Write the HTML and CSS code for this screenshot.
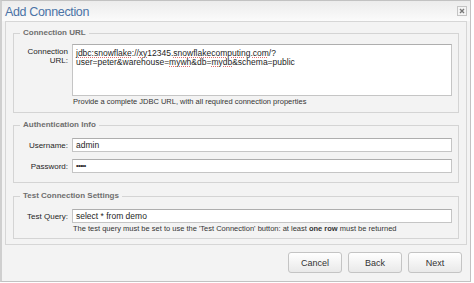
FILE: index.html
```html
<!DOCTYPE html>
<html>
<head>
<meta charset="utf-8">
<link rel="stylesheet" href="styles.css">
</head>
<body>
<div class="window">
  <div class="titlebar">
    <span class="title">Add Connection</span>
    <span class="close">
      <svg width="10" height="10" viewBox="0 0 10 10"><rect x="0.5" y="0.5" width="9" height="9" fill="#f4f4f4" stroke="#c4c4c4"/><path d="M3 3 L7 7 M7 3 L3 7" stroke="#777" stroke-width="1.4"/></svg>
    </span>
  </div>
  <div class="panel">
    <fieldset class="group g-url">
      <legend>Connection URL</legend>
      <div class="row">
        <label class="lbl">Connection<br>URL:</label>
        <div class="field">
          <div class="textarea"><span class="sp">jdbc:snowflake</span>://<span class="sp">xy</span>12345.<span class="sp">snowflakecomputing</span>.<span class="sp">com</span>/?<br>user=peter&amp;warehouse=<span class="sp">mywh</span>&amp;db=<span class="sp">mydb</span>&amp;schema=public</div>
          <div class="hint">Provide a complete JDBC URL, with all required connection properties</div>
        </div>
      </div>
    </fieldset>
    <fieldset class="group g-auth">
      <legend>Authentication Info</legend>
      <div class="row">
        <label class="lbl">Username:</label>
        <div class="field"><div class="input">admin</div></div>
      </div>
      <div class="row">
        <label class="lbl">Password:</label>
        <div class="field"><div class="input pw">&bull;&bull;&bull;&bull;&bull;</div></div>
      </div>
    </fieldset>
    <fieldset class="group g-test">
      <legend>Test Connection Settings</legend>
      <div class="row">
        <label class="lbl">Test Query:</label>
        <div class="field">
          <div class="input">select * from demo</div>
          <div class="hint">The test query must be set to use the 'Test Connection' button: at least <b>one row</b> must be returned</div>
        </div>
      </div>
    </fieldset>
  </div>
  <div class="footer">
    <button class="btn">Cancel</button>
    <button class="btn">Back</button>
    <button class="btn">Next</button>
  </div>
</div>
</body>
</html>
```
FILE: styles.css
```css
* { box-sizing: border-box; }
html, body { margin: 0; padding: 0; background: #ffffff; }
body { font-family: "Liberation Sans", Arial, sans-serif; color: #222; }

.window {
  width: 471px;
  height: 282px;
  background: #f3f3f3;
  border: 1px solid #c2c2c2;
  border-left: 2px solid #cfcfcf;
  display: flex;
  flex-direction: column;
}

.titlebar {
  height: 20px;
  display: flex;
  align-items: center;
  justify-content: space-between;
  padding: 0 3px 0 3px;
  background: linear-gradient(#ececec, #fbfbfb);
}
.title {
  font-size: 12.5px;
  letter-spacing: -0.35px;
  color: #4b73a6;
  margin-top: 2px;
}
.close { display: flex; margin-top: 0px; }

.panel {
  margin: 0 3px 0 3px;
  border: 1px solid #d6d6d6;
  background: #f3f3f3;
  padding: 6px 7px 5px 7px;
  display: flex;
  flex-direction: column;
}

.group {
  margin: 0;
  border: 1px solid #d4d4d4;
  padding: 0 6px 0 0;
}
.group legend {
  font-size: 8px;
  line-height: 10px;
  font-weight: bold;
  color: #6e6e6e;
  padding: 0 3px;
  margin-left: 6px;
}
.g-url { padding-top: 6px; padding-bottom: 5px; }
.g-auth { margin-top: 7px; padding-top: 8px; padding-bottom: 9px; }
.g-test { margin-top: 8px; padding-top: 8px; padding-bottom: 4px; }

.row { display: flex; gap: 3px; }
.row + .row { margin-top: 7px; }
.lbl {
  width: 55px;
  flex: none;
  text-align: right;
  font-size: 8px;
  line-height: 9px;
  color: #1e1e1e;
  padding-top: 3px;
  padding-right: 1px;
}
.field { flex: 1; display: flex; flex-direction: column; }

.textarea, .input {
  background: #fff;
  border: 1px solid #c5c5c5;
  border-top-color: #aeaeae;
  font-size: 8.5px;
  color: #1e1e1e;
  padding: 0 3px;
}
.textarea { height: 52px; line-height: 9px; padding-top: 4px; }
.input { height: 14px; line-height: 12px; }
.pw { letter-spacing: -0.5px; font-size: 7px; }

.sp {
  text-decoration: underline dotted #e07070;
  text-decoration-thickness: 1px;
  text-underline-offset: 0.5px;
}

.hint {
  font-size: 7.5px;
  line-height: 10px;
  color: #333;
  margin-top: 1px;
  padding-left: 1px;
}
.hint b { font-weight: bold; }

.footer {
  display: flex;
  justify-content: flex-end;
  gap: 6px;
  padding: 7px 8px 0 0;
}
.btn {
  width: 54px;
  height: 21px;
  font-family: "Liberation Sans", Arial, sans-serif;
  font-size: 9px;
  color: #333;
  border: 1px solid #c4c4c4;
  border-radius: 3px;
  background: linear-gradient(#ffffff, #e9e9e9);
  padding: 0;
}
```
